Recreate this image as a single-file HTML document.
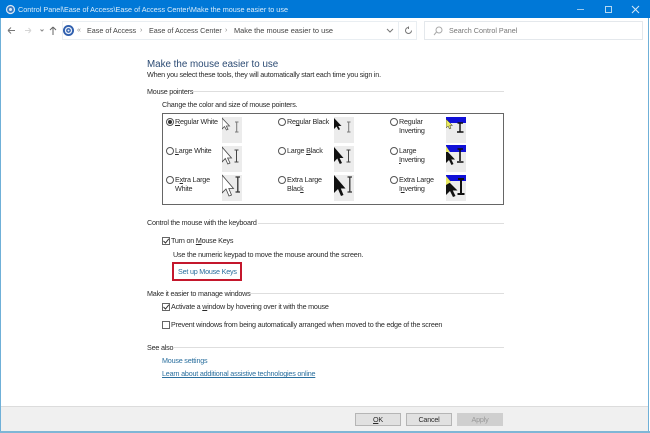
<!DOCTYPE html>
<html><head><meta charset="utf-8"><style>
html,body{margin:0;padding:0;background:#fff}
#w{position:relative;width:650px;height:433px;overflow:hidden;background:#fff;font-family:"Liberation Sans",sans-serif;font-size:7.2px;letter-spacing:-.21px;color:#2a2a2a;filter:blur(.3px)}
#w div,#w svg{position:absolute}
.t{white-space:nowrap;line-height:9px}
.n{letter-spacing:0}
.l{color:#2a6f9e}
.line{height:1px;background:#dedede}
.r{width:6px;height:6px;border:1px solid #555;border-radius:50%;background:#fff}
.p{width:20px;height:26px;background:#ececec}
.c{width:6px;height:6px;border:1px solid #666;background:#fff}
.b{top:413px;height:13px;background:#e1e1e1;border:1px solid #b5b5b5;box-sizing:border-box;text-align:center;line-height:11px}
u{text-underline-offset:1px}
</style></head><body><div id="w">
<div style="left:0;top:0;width:650px;height:18px;background:#0078d7"></div>
<div style="left:0;top:18px;width:1px;height:415px;background:#6fb0d8"></div>
<div style="left:648px;top:18px;width:1px;height:415px;background:#6fb0d8"></div>
<div style="left:0;top:431px;width:650px;height:2px;background:#7fb6d6"></div>
<svg style="left:5px;top:4px" width="11" height="11" viewBox="0 0 11 11"><circle cx="5.5" cy="5.5" r="4" fill="#3a7cc4" stroke="#dce8f4" stroke-width="1.2"/><circle cx="5.5" cy="5.5" r="1.5" fill="#dce8f4"/></svg>
<div class="t n" style="left:18px;top:5px;color:#d9ecfa;font-size:7.26px">Control Panel\Ease of Access\Ease of Access Center\Make the mouse easier to use</div>
<div style="left:577px;top:9px;width:7px;height:1px;background:#9cc9ec"></div>
<div style="left:605px;top:6px;width:5px;height:5px;border:1px solid #b5d8f2"></div>
<svg style="left:631px;top:5px" width="9" height="9" viewBox="0 0 9 9"><path d="M1 1L8 8M8 1L1 8" stroke="#d4e8f7" stroke-width="1"/></svg>

<svg style="left:6px;top:24px" width="52" height="13" viewBox="0 0 52 13"><path d="M2 6.5H9M2 6.5L5 3.5M2 6.5L5 9.5" stroke="#777" fill="none"/><path d="M19 6.5H25M25 6.5L22.500 4M25 6.5L22.500 9" stroke="#d5d5d5" fill="none"/><path d="M34.500 5.500L36 7L37.500 5.500" stroke="#888" fill="none"/><path d="M47 11V3M47 3L44 6M47 3L50 6" stroke="#666" fill="none"/></svg>
<div style="left:62px;top:21px;width:355px;height:19px;border:1px solid #e9eef2;box-sizing:border-box"></div>
<div style="left:398px;top:21px;width:1px;height:19px;background:#e9eef2"></div>
<div style="left:424px;top:21px;width:219px;height:19px;border:1px solid #e4e8ec;box-sizing:border-box"></div>
<svg style="left:62px;top:24px" width="13" height="13" viewBox="0 0 13 13"><circle cx="6.500" cy="6.500" r="5.500" fill="#2f5fae"/><circle cx="6.500" cy="6.500" r="3" fill="none" stroke="#e8eef8" stroke-width="1.300"/><circle cx="6.500" cy="6.500" r="1" fill="#e8eef8"/></svg>
<div class="t n" style="left:77px;top:26px;color:#888;font-size:7px">«</div>
<div class="t n" style="left:87px;top:26px;font-size:7.2px;color:#444">Ease of Access</div>
<div class="t n" style="left:140px;top:26px;font-size:7px;color:#888">›</div>
<div class="t n" style="left:149px;top:26px;font-size:7.2px;color:#444">Ease of Access Center</div>
<div class="t n" style="left:225px;top:26px;font-size:7px;color:#888">›</div>
<div class="t n" style="left:234px;top:26px;font-size:7.4px;color:#444">Make the mouse easier to use</div>
<svg style="left:386px;top:28px" width="8" height="6" viewBox="0 0 8 6"><path d="M1 1L4 4L7 1" stroke="#777" fill="none"/></svg>
<svg style="left:404px;top:26px" width="9" height="9" viewBox="0 0 9 9"><path d="M4.500 1.500A3 3 0 1 0 7.500 4.500M4.500 0.500V3" stroke="#777" fill="none"/></svg>
<svg style="left:433px;top:26px" width="10" height="10" viewBox="0 0 10 10"><circle cx="6" cy="4" r="3" fill="none" stroke="#aaa"/><path d="M3.500 6L1 9" stroke="#aaa"/></svg>
<div class="t n" style="left:449px;top:26px;font-size:7.2px;color:#777">Search Control Panel</div>

<div class="t n" style="left:147px;top:58px;font-size:9.8px;line-height:13px;color:#2b4a73">Make the mouse easier to use</div>
<div class="t" style="left:147px;top:70px">When you select these tools, they will automatically start each time you sign in.</div>

<div class="t" style="left:147px;top:87px">Mouse pointers</div>
<div class="line" style="left:193px;top:91px;width:311px"></div>
<div class="t" style="left:162px;top:100px">Change the color and size of mouse pointers.</div>

<div style="left:162px;top:113px;width:342px;height:92px;border:1px solid #666;box-sizing:border-box"></div>

<div class="r" style="left:166px;top:118px"></div><div style="left:168px;top:120px;width:4px;height:4px;border-radius:50%;background:#333"></div>
<div class="r" style="left:166px;top:147px"></div>
<div class="r" style="left:166px;top:176px"></div>
<div class="r" style="left:278px;top:118px"></div>
<div class="r" style="left:278px;top:147px"></div>
<div class="r" style="left:278px;top:176px"></div>
<div class="r" style="left:390px;top:118px"></div>
<div class="r" style="left:390px;top:147px"></div>
<div class="r" style="left:390px;top:176px"></div>

<div class="t" style="left:175px;top:117px"><u>R</u>egular White</div>
<div class="t" style="left:175px;top:146px"><u>L</u>arge White</div>
<div class="t" style="left:175px;top:175px">E<u>x</u>tra Large<br>White</div>
<div class="t" style="left:287px;top:117px">Re<u>g</u>ular Black</div>
<div class="t" style="left:287px;top:146px">Large <u>B</u>lack</div>
<div class="t" style="left:287px;top:175px">Extra Large<br>Blac<u>k</u></div>
<div class="t" style="left:399px;top:117px">Regular<br>Inverting</div>
<div class="t" style="left:399px;top:146px">Large<br><u>I</u>nverting</div>
<div class="t" style="left:399px;top:175px">Extra Large<br>I<u>n</u>verting</div>

<div class="p" style="left:222px;top:117px"></div>
<div class="p" style="left:222px;top:146px"></div>
<div class="p" style="left:222px;top:175px"></div>
<div class="p" style="left:334px;top:117px"></div>
<div class="p" style="left:334px;top:146px"></div>
<div class="p" style="left:334px;top:175px"></div>
<div class="p" style="left:446px;top:117px"></div>
<div class="p" style="left:446px;top:146px"></div>
<div class="p" style="left:446px;top:175px"></div>

<svg style="left:222px;top:117px" width="20" height="84" viewBox="0 0 20 84">
<path d="M0 1V12L2.500 9.500L4.500 13L6 12.300L4.300 9H7.500Z" fill="#fff" stroke="#555" stroke-width=".8"/>
<path d="M13 5H16.500M14.700 5V15M13 15H16.500" stroke="#777" fill="none"/>
<path d="M0 30V45L3.300 41.500L5.800 47L8 46L5.600 41H9.500Z" fill="#fff" stroke="#444" stroke-width=".8"/>
<path d="M12.500 33H16.500M14.500 33V45M12.500 45H16.500" stroke="#444" fill="none" stroke-width="1"/>
<path d="M0 58V76L4 72L7 79L9.500 78L6.800 71.500H11.500Z" fill="#fff" stroke="#444" stroke-width=".8"/>
<path d="M13.500 60H18M15.800 60V75M13.500 75H18" stroke="#333" fill="none" stroke-width="1.300"/>
</svg>
<svg style="left:334px;top:117px" width="20" height="84" viewBox="0 0 20 84">
<path d="M0 1V12L2.500 9.500L4.500 13L6 12.300L4.300 9H7.500Z" fill="#111"/>
<path d="M13 5H16.500M14.700 5V15M13 15H16.500" stroke="#777" fill="none"/>
<path d="M0 30V45L3.300 41.500L5.800 47L8 46L5.600 41H9.500Z" fill="#111"/>
<path d="M12.500 33H16.500M14.500 33V45M12.500 45H16.500" stroke="#444" fill="none" stroke-width="1"/>
<path d="M0 58V76L4 72L7 79L9.500 78L6.800 71.500H11.500Z" fill="#111"/>
<path d="M13.500 60H18M15.800 60V75M13.500 75H18" stroke="#333" fill="none" stroke-width="1.300"/>
</svg>
<svg style="left:446px;top:117px" width="20" height="84" viewBox="0 0 20 84">
<rect x="0" y="0" width="20" height="6" fill="#1010d8"/>
<path d="M0 2V11L2 9L3.500 12L5 11.300L3.800 8.500H6.500Z" fill="#e8e860" stroke="#333" stroke-width=".5"/>
<path d="M11.500 6H17M14 6V15M11 15H17.500" stroke="#111" fill="none" stroke-width="1.400"/>
<rect x="0" y="28" width="20" height="7" fill="#1010d8"/>
<path d="M0 33V46L3 43L5.500 48L7.500 47L5.300 42.500H9Z" fill="#111"/><path d="M0 29V35L4 35Z" fill="#e8e860"/>
<path d="M11.500 32H17M14 32V44M11 45H17.500" stroke="#111" fill="none" stroke-width="1.600"/>
<rect x="0" y="58" width="20" height="6" fill="#1010d8"/>
<path d="M0 62V78L4 74L7 80L9.500 79L6.800 73.500H11.500Z" fill="#111"/><path d="M0 59V68L5 65Z" fill="#e8e860"/>
<path d="M12 62H18M15 62V76M11.500 77H18.500" stroke="#111" fill="none" stroke-width="2"/>
</svg>

<div class="t" style="left:147px;top:218px">Control the mouse with the keyboard</div>
<div class="line" style="left:258px;top:223px;width:246px"></div>
<div class="c" style="left:162px;top:237px"></div>
<svg style="left:162px;top:237px" width="8" height="8" viewBox="0 0 8 8"><path d="M1.500 4L3.500 6L6.800 1.800" stroke="#333" fill="none"/></svg>
<div class="t" style="left:171px;top:236px">Turn on <u>M</u>ouse Keys</div>
<div class="t" style="left:173px;top:250px">Use the numeric keypad to move the mouse around the screen.</div>
<div style="left:172px;top:262px;width:70px;height:19px;border:2px solid #c4172c;box-sizing:border-box"></div>
<div class="t l" style="left:178px;top:267px">Set up Mouse Keys</div>

<div class="t" style="left:147px;top:289px">Make it easier to manage windows</div>
<div class="line" style="left:250px;top:293px;width:254px"></div>
<div class="c" style="left:162px;top:303px"></div>
<svg style="left:162px;top:303px" width="8" height="8" viewBox="0 0 8 8"><path d="M1.500 4L3.500 6L6.800 1.800" stroke="#333" fill="none"/></svg>
<div class="t" style="left:171px;top:302px">Activate a <u>w</u>indow by hovering over it with the mouse</div>
<div class="c" style="left:162px;top:321px"></div>
<div class="t" style="left:171px;top:320px">Prevent windows from being automatically arranged when moved to the edge of the screen</div>

<div class="t" style="left:147px;top:343px">See also</div>
<div class="line" style="left:173px;top:347px;width:331px"></div>
<div class="t l" style="left:162px;top:356px">Mouse settings</div>
<div class="t l" style="left:162px;top:369px;text-decoration:underline">Learn about additional assistive technologies online</div>

<div style="left:1px;top:406px;width:647px;height:25px;background:#f0f0f0;border-top:1px solid #dcdcdc;box-sizing:border-box"></div>
<div class="b" style="left:355px;width:46px"><u>O</u>K</div>
<div class="b" style="left:406px;width:46px">Cancel</div>
<div class="b" style="left:457px;width:46px;color:#999;background:#cfcfcf;border-color:#cfcfcf">Apply</div>
</div></body></html>
